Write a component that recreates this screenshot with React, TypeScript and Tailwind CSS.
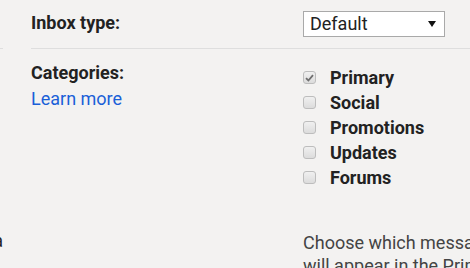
import React from "react";

const Check = ({ checked }: { checked?: boolean }) => (
  <span className="relative flex h-[13px] w-[13px] shrink-0 items-center justify-center rounded-[3px] border border-[#bdbdbd] bg-gradient-to-b from-[#f0f0f0] to-[#dcdcdc]">
    {checked && (
      <svg width="9" height="8" viewBox="0 0 9 8" className="block">
        <path d="M1 4.2 L3.4 6.5 L8 1.2" stroke="#6f6f6f" strokeWidth="1.8" fill="none" />
      </svg>
    )}
  </span>
);

export default function App() {
  const cats = ["Primary", "Social", "Promotions", "Updates", "Forums"];
  return (
    <div
      className="h-[268px] w-[470px] overflow-hidden bg-[#f3f2f1] text-[18px] text-[#222]"
      style={{ fontFamily: "Roboto, 'Liberation Sans', sans-serif" }}
    >
      {/* Inbox type row */}
      <div className="flex h-[49px]">
        <div className="w-[3px] shrink-0 border-b border-[#dedede]" />
        <div className="w-[28px] shrink-0" />
        <div className="flex min-w-0 flex-1 items-start border-b border-[#dedede]">
          <div className="w-[272px] shrink-0 pt-[11px] font-bold leading-[24px]">Inbox type:</div>
          <div className="mt-[11px] flex h-[26px] w-[142px] shrink-0 items-center justify-between border border-[#a9a9a9] bg-white pl-[6px] pr-[8px] leading-none">
            <span>Default</span>
            <svg width="8" height="6" viewBox="0 0 8 6">
              <path d="M0 0 H8 L4 6 Z" fill="#111" />
            </svg>
          </div>
        </div>
      </div>
      {/* Categories */}
      <div className="flex">
        <div className="relative w-[3px] shrink-0 overflow-hidden">
          <div className="absolute right-0 top-[180px] whitespace-nowrap leading-[23px] text-[#222]">
            <div>data</div>
            <div>mo</div>
          </div>
        </div>
        <div className="w-[28px] shrink-0" />
        <div className="flex min-w-0 flex-1">
          <div className="w-[272px] shrink-0 pt-[12px]">
            <div className="font-bold leading-[24px]">Categories:</div>
            <div className="leading-[28px] text-[#1a5fd8]">Learn more</div>
          </div>
          <div className="min-w-0 flex-1 pt-[16px]">
            <div className="flex flex-col">
              {cats.map((c, i) => (
                <div key={c} className="flex h-[25px] items-center gap-[14px]">
                  <Check checked={i === 0} />
                  <span className="font-bold">{c}</span>
                </div>
              ))}
            </div>
            <div className="mt-[41px] whitespace-nowrap leading-[23px] text-[#444]">
              <div>Choose which message tabs</div>
              <div>will appear in the Primary tab</div>
            </div>
          </div>
        </div>
      </div>
    </div>
  );
}
